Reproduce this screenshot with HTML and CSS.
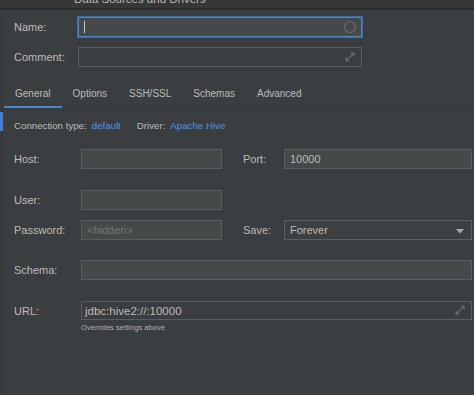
FILE: index.html
```html
<!DOCTYPE html>
<html>
<head>
<meta charset="utf-8">
<link rel="stylesheet" href="styles.css">
</head>
<body>
<div class="window">
  <div class="titlebar"><span class="title">Data Sources and Drivers</span></div>
  <div class="main">
    <div class="sidebar"><div class="sel"></div></div>
    <div class="content">
      <div class="top-form">
        <label class="lbl">Name:</label>
        <div class="field name-field focused"><span class="caret"></span>
          <svg class="ico-circle" width="14" height="14" viewBox="0 0 14 14"><circle cx="7" cy="7" r="5.5" fill="none" stroke="#6f6f6f" stroke-width="1.2"/></svg>
        </div>
        <label class="lbl">Comment:</label>
        <div class="field area">
          <svg class="ico-expand" width="12" height="12" viewBox="0 0 12 12"><path d="M2 10 L10 2 M6.5 2 H10 V5.5 M2 6.5 V10 H5.5" fill="none" stroke="#6a6d6f" stroke-width="1.2"/></svg>
        </div>
      </div>

      <div class="tabs">
        <div class="tab active">General</div>
        <div class="tab">Options</div>
        <div class="tab">SSH/SSL</div>
        <div class="tab">Schemas</div>
        <div class="tab">Advanced</div>
      </div>

      <div class="conn">
        <span>Connection type:</span><a class="link">default</a>
        <span class="drv">Driver:</span><a class="link">Apache Hive</a>
      </div>

      <div class="form">
        <div class="row r-host">
          <label class="lbl2">Host:</label>
          <div class="field inp short"></div>
          <label class="lbl3">Port:</label>
          <div class="field inp grow"><span class="val">10000</span></div>
        </div>
        <div class="row r-user">
          <label class="lbl2">User:</label>
          <div class="field inp short"></div>
        </div>
        <div class="row r-pass">
          <label class="lbl2">Password:</label>
          <div class="field inp short"><span class="ph">&lt;hidden&gt;</span></div>
          <label class="lbl3">Save:</label>
          <div class="field select grow"><span class="val">Forever</span>
            <svg class="ico-arrow" width="8" height="5" viewBox="0 0 8 5"><path d="M0 0 H8 L4 4.5 Z" fill="#a9abad"/></svg>
          </div>
        </div>
        <div class="row r-schema">
          <label class="lbl2">Schema:</label>
          <div class="field inp grow"></div>
        </div>
        <div class="row r-url">
          <label class="lbl2">URL:</label>
          <div class="field area grow url"><span class="val">jdbc:hive2://:10000</span>
            <svg class="ico-expand" width="12" height="12" viewBox="0 0 12 12"><path d="M2 10 L10 2 M6.5 2 H10 V5.5 M2 6.5 V10 H5.5" fill="none" stroke="#6a6d6f" stroke-width="1.2"/></svg>
          </div>
        </div>
        <div class="hint">Overrides settings above</div>
      </div>
    </div>
  </div>
</div>
</body>
</html>
```
FILE: styles.css
```css
html, body {
  margin: 0;
  padding: 0;
  background: #3b3e40;
}
body {
  width: 474px;
  height: 395px;
  overflow: hidden;
  font-family: "Liberation Sans", Arial, sans-serif;
  font-size: 10px;
  color: #bbbbbb;
}
.window {
  display: flex;
  flex-direction: column;
  height: 395px;
}
.titlebar {
  height: 8px;
  overflow: hidden;
  background: #353739;
  border-bottom: 2px solid #2b2c2d;
  position: relative;
}
.title {
  display: block;
  margin-top: -8px;
  margin-left: 74px;
  font-size: 11.5px;
  line-height: 14px;
  color: #b8b8b8;
}
.main {
  flex: 1;
  display: flex;
}
.sidebar {
  width: 2px;
  background: #3a3c3e;
  border-right: 1px solid #323436;
  position: relative;
}
.sel {
  position: absolute;
  left: 0;
  top: 102px;
  width: 3px;
  height: 19px;
  background: #3f7ed6;
}
.content {
  flex: 1;
  display: flex;
  flex-direction: column;
}
.top-form {
  display: grid;
  grid-template-columns: 64px 284px;
  grid-auto-rows: 20px;
  row-gap: 10px;
  margin-top: 7px;
  padding-left: 11px;
  align-items: center;
}
.lbl {
  font-size: 11px;
}
.field {
  box-sizing: border-box;
  height: 20px;
  border: 1px solid #5b5e60;
  position: relative;
  display: flex;
  align-items: center;
}
.name-field {
  background: #45494a;
  border-color: #4a86c5;
  box-shadow: 0 0 0 1px #3e6ea3, 0 4px 0 -3px #5a3a3e;
}
.caret {
  display: block;
  width: 1px;
  height: 12px;
  background: #c8c8c8;
  margin-left: 5px;
}
.ico-circle {
  position: absolute;
  right: 4px;
  top: 2px;
}
.area {
  background: #3b3e40;
}
.ico-expand {
  position: absolute;
  right: 5px;
  top: 3px;
}
.tabs {
  display: flex;
  margin-top: 14px;
  margin-left: 1px;
  border-bottom: 1px solid #343638;
  height: 27px;
}
.tab {
  padding: 0 11px;
  line-height: 25px;
  font-size: 10px;
  border-bottom: 2px solid transparent;
  color: #bbbbbb;
}
.tab.active {
  border-bottom-color: #4a88c7;
}
.conn {
  margin-top: 11px;
  padding-left: 11px;
  font-size: 9.7px;
  line-height: 12px;
  display: flex;
}
.link {
  color: #5394ec;
  margin-left: 5px;
}
.drv {
  margin-left: 16px;
}
.form {
  padding-left: 11px;
  margin-top: 17px;
  display: flex;
  flex-direction: column;
}
.row {
  display: flex;
  align-items: center;
  height: 20px;
}
.lbl2 {
  width: 67px;
  font-size: 11px;
}
.lbl3 {
  width: 41px;
  margin-left: 21px;
  font-size: 11px;
}
.inp {
  background: #45494a;
}
.short {
  width: 141px;
}
.grow {
  flex: 1;
  margin-right: 2px;
}
.select {
  background: #3d4042;
  border-color: #5e6163;
}
.val {
  margin-left: 5px;
  font-size: 11px;
  color: #bcbcbc;
}
.url .val {
  margin-left: 3px;
  font-size: 11.5px;
}
.ph {
  margin-left: 5px;
  font-size: 11px;
  color: #767879;
}
.ico-arrow {
  position: absolute;
  right: 7px;
  top: 8px;
}
.r-user { margin-top: 21px; }
.r-pass { margin-top: 10px; }
.r-schema { margin-top: 20px; }
.r-url { margin-top: 21px; height: 19px; }
.r-url .field { height: 19px; }
.r-url .ico-expand { top: 2px; }
.hint {
  margin-left: 67px;
  margin-top: 3px;
  font-size: 7.6px;
  color: #b0b0b0;
}
```
